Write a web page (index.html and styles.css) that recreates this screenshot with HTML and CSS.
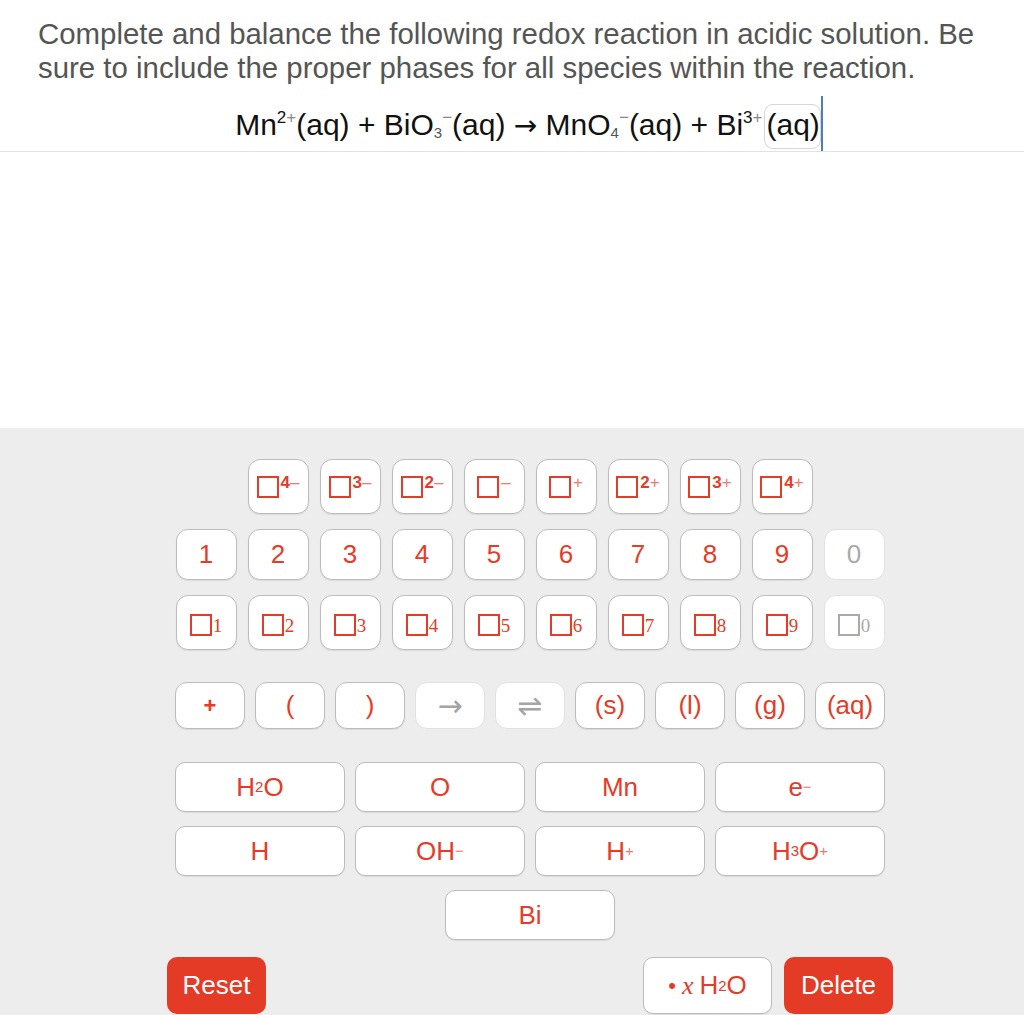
FILE: index.html
```html
<!DOCTYPE html>
<html>
<head>
<meta charset="utf-8">
<link rel="stylesheet" href="styles.css">
</head>
<body>
<div class="top">
  <p class="prompt">Complete and balance the following redox reaction in acidic solution. Be sure to include the proper phases for all species within the reaction.</p>
  <div class="equation">
    <span>Mn<sup class="ch"><b>2</b><i>+</i></sup>(aq) + BiO<sub class="sb">3</sub><sup class="ch"><i>−</i></sup>(aq) <span class="arr">→</span> MnO<sub class="sb">4</sub><sup class="ch"><i>−</i></sup>(aq) + Bi<sup class="ch"><b>3</b><i>+</i></sup><span class="focus">(aq)</span><span class="cursor"></span></span>
  </div>
</div>
<div class="blank"></div>
<div class="pad">
  <div class="keys">
    <div class="row r1">
      <button class="k"><span class="box"></span><span class="sup"><b>4</b><i>–</i></span></button>
      <button class="k"><span class="box"></span><span class="sup"><b>3</b><i>–</i></span></button>
      <button class="k"><span class="box"></span><span class="sup"><b>2</b><i>–</i></span></button>
      <button class="k"><span class="box"></span><span class="sup"><i>–</i></span></button>
      <button class="k"><span class="box"></span><span class="sup"><i>+</i></span></button>
      <button class="k"><span class="box"></span><span class="sup"><b>2</b><i>+</i></span></button>
      <button class="k"><span class="box"></span><span class="sup"><b>3</b><i>+</i></span></button>
      <button class="k"><span class="box"></span><span class="sup"><b>4</b><i>+</i></span></button>
    </div>
    <div class="row r2">
      <button class="k num">1</button>
      <button class="k num">2</button>
      <button class="k num">3</button>
      <button class="k num">4</button>
      <button class="k num">5</button>
      <button class="k num">6</button>
      <button class="k num">7</button>
      <button class="k num">8</button>
      <button class="k num">9</button>
      <button class="k num off">0</button>
    </div>
    <div class="row r3">
      <button class="k"><span class="box"></span><span class="sub">1</span></button>
      <button class="k"><span class="box"></span><span class="sub">2</span></button>
      <button class="k"><span class="box"></span><span class="sub">3</span></button>
      <button class="k"><span class="box"></span><span class="sub">4</span></button>
      <button class="k"><span class="box"></span><span class="sub">5</span></button>
      <button class="k"><span class="box"></span><span class="sub">6</span></button>
      <button class="k"><span class="box"></span><span class="sub">7</span></button>
      <button class="k"><span class="box"></span><span class="sub">8</span></button>
      <button class="k"><span class="box"></span><span class="sub">9</span></button>
      <button class="k off"><span class="box"></span><span class="sub">0</span></button>
    </div>
    <div class="row r4">
      <button class="k plus">+</button>
      <button class="k">(</button>
      <button class="k">)</button>
      <button class="k off arrow">→</button>
      <button class="k off arrow">⇌</button>
      <button class="k">(s)</button>
      <button class="k">(l)</button>
      <button class="k">(g)</button>
      <button class="k">(aq)</button>
    </div>
    <div class="row r5">
      <button class="k">H<span class="s">2</span>O</button>
      <button class="k">O</button>
      <button class="k">Mn</button>
      <button class="k">e<span class="p">−</span></button>
    </div>
    <div class="row r6">
      <button class="k">H</button>
      <button class="k">OH<span class="p">−</span></button>
      <button class="k">H<span class="p">+</span></button>
      <button class="k">H<span class="s">3</span>O<span class="p">+</span></button>
    </div>
    <div class="row r7">
      <button class="k">Bi</button>
    </div>
    <div class="actions">
      <button class="red reset">Reset</button>
      <div class="right">
        <button class="k water"><span class="dot">•</span> <span class="x">x</span> H<span class="s">2</span>O</button>
        <button class="red del">Delete</button>
      </div>
    </div>
  </div>
</div>
</body>
</html>
```
FILE: styles.css
```css
* { box-sizing: border-box; }
html, body { margin: 0; padding: 0; background: #fff; }
body { font-family: "Liberation Sans", Arial, sans-serif; height: 1015px; overflow: hidden; }

.top { padding: 17px 0 0 38px; border-bottom: 1px solid #e2e2e2; height: 152px; }
.prompt { margin: 0; width: 960px; font-size: 29.4px; line-height: 34px; color: #555; }
.equation { display: flex; justify-content: center; margin-top: 11px; font-size: 30px; color: #111; }
.equation > span { position: relative; display: inline-block; margin-left: -4px; }
.equation sup, .equation sub { font-size: 17px; line-height: 0; }
.equation sup { vertical-align: 12px; }
.equation sub { vertical-align: -3px; color: #555; font-size: 15px; }
.equation sup b { font-weight: normal; }
.equation sup i { font-style: normal; color: #888; }
.arr { font-family: "DejaVu Sans", sans-serif; font-size: 28px; }
.focus { display: inline-block; border: 1px solid #d6d6d6; border-radius: 9px; padding: 3px 0 6px 2px; margin-left: 1px; }
.cursor { display: inline-block; width: 2px; height: 55px; background: #4f7db5; vertical-align: -16px; }

.blank { height: 276px; }
.pad { background: #ededed; height: 600px; padding-left: 36px; }
.keys { width: 988px; padding-top: 31px; display: flex; flex-direction: column; align-items: center; }
.row { display: flex; gap: 11px; }
.k { background: #fff; border: 1px solid #bcbcbc; border-radius: 12px; color: #e63b28; font-family: "Liberation Sans", Arial, sans-serif; font-size: 26px; display: flex; align-items: center; justify-content: center; padding: 0; box-shadow: 0 1px 1px rgba(0,0,0,0.08); }
.k.off { color: #aaa; border-color: #e2e2e2; box-shadow: none; }
.box { display: inline-block; width: 22px; height: 22px; border: 2px solid #e63b28; }
.off .box { border-color: #aaa; }

.r1 .k { width: 61px; height: 55px; }
.r1 .sup { align-self: flex-start; margin-top: 14px; margin-left: 2px; font-size: 17px; line-height: 17px; display: flex; }
.r1 .sup b { font-weight: bold; }
.r1 .sup i { font-style: normal; font-weight: normal; color: #ef7b6c; font-size: 17px; }

.r2 { margin-top: 15px; }
.r2 .k { width: 61px; height: 51px; }

.r3 { margin-top: 15px; }
.r3 .k { width: 61px; height: 55px; padding-top: 4px; }
.r3 .sub { font-family: "Liberation Serif", "Times New Roman", serif; font-size: 19px; align-self: flex-end; margin-bottom: 12px; margin-left: 1px; }

.r4 { margin-top: 32px; gap: 10px; }
.r4 .k { width: 70px; height: 47px; }
.r4 .plus { font-weight: bold; font-size: 22px; }
.r4 .arrow { font-family: "DejaVu Sans", sans-serif; font-size: 30px; color: #a5a5a5; }

.r5 { margin-top: 33px; gap: 10px; }
.r5 .k, .r6 .k, .r7 .k { width: 170px; height: 50px; border-radius: 10px; }
.r6 { margin-top: 14px; gap: 10px; }
.r7 { margin-top: 14px; }
.s { font-size: 15px; vertical-align: -4px; line-height: 0; }
.p { font-size: 15px; vertical-align: 10px; line-height: 0; color: #ef7b6c; }

.actions { width: 726px; margin-top: 17px; display: flex; justify-content: space-between; }
.right { display: flex; gap: 12px; }
.red { background: #e43b26; color: #fff; border: none; border-radius: 10px; font-family: "Liberation Sans", Arial, sans-serif; font-size: 26px; height: 57px; padding: 0; }
.reset { width: 99px; }
.del { width: 109px; }
.water { width: 129px; height: 57px; border-radius: 10px; gap: 0; }
.water .dot { font-size: 22px; margin-right: 6px; }
.water .x { font-family: "Liberation Serif", serif; font-style: italic; margin-right: 6px; }
```
